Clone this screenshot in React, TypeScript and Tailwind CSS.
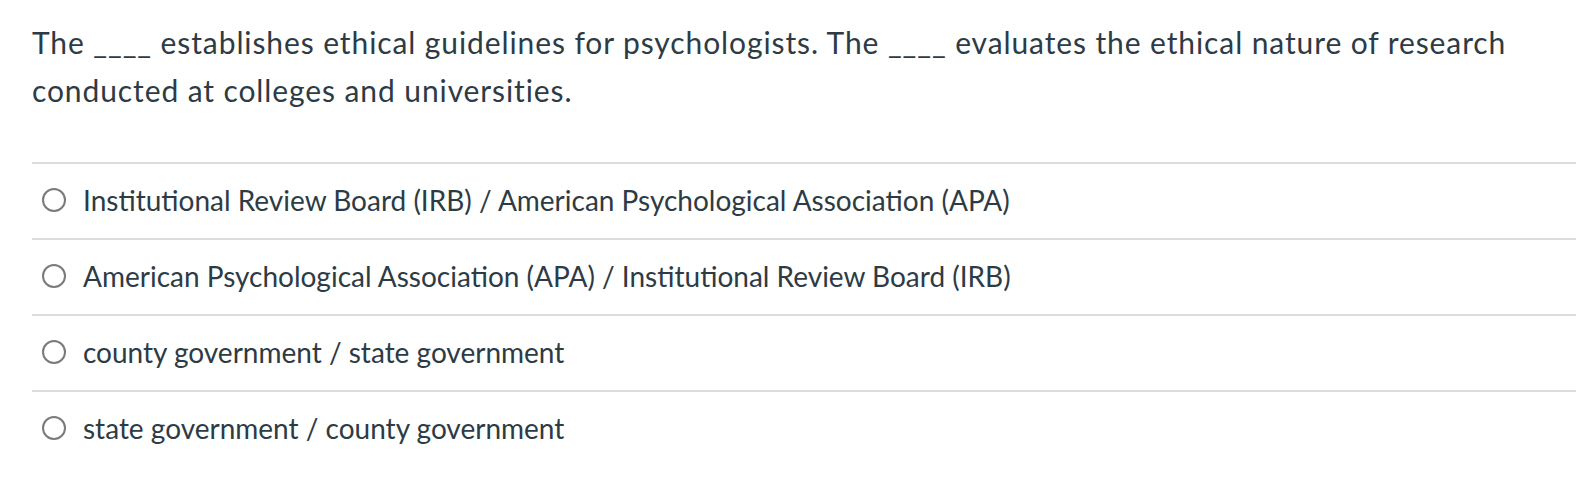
import React from "react";

const options = [
  "Institutional Review Board (IRB) / American Psychological Association (APA)",
  "American Psychological Association (APA) / Institutional Review Board (IRB)",
  "county government / state government",
  "state government / county government",
];

export default function App() {
  return (
    <div
      className="w-[1578px] h-[484px] bg-white pl-[32px] pr-[2px] pt-[18px] text-[#2d3b45]"
      style={{ fontFamily: "Lato, 'Open Sans', sans-serif" }}
    >
      {/* Question text */}
      <p className="text-[30px] leading-[48px] tracking-[0.9px]">
        The ____ establishes ethical guidelines for psychologists. The ____ evaluates the ethical nature of research
        conducted at colleges and universities.
      </p>

      {/* Answers */}
      <div className="mt-[48px]">
        {options.map((opt) => (
          <label
            key={opt}
            className="flex items-center h-[76px] border-t-2 border-[#dcdcdc] pb-[3px]"
          >
            <span className="ml-[10px] w-[24px] h-[24px] rounded-full border-2 border-[#7a7a7a] shrink-0" />
            <span className="ml-[17px] text-[28px] leading-[32px]">{opt}</span>
          </label>
        ))}
      </div>
    </div>
  );
}
